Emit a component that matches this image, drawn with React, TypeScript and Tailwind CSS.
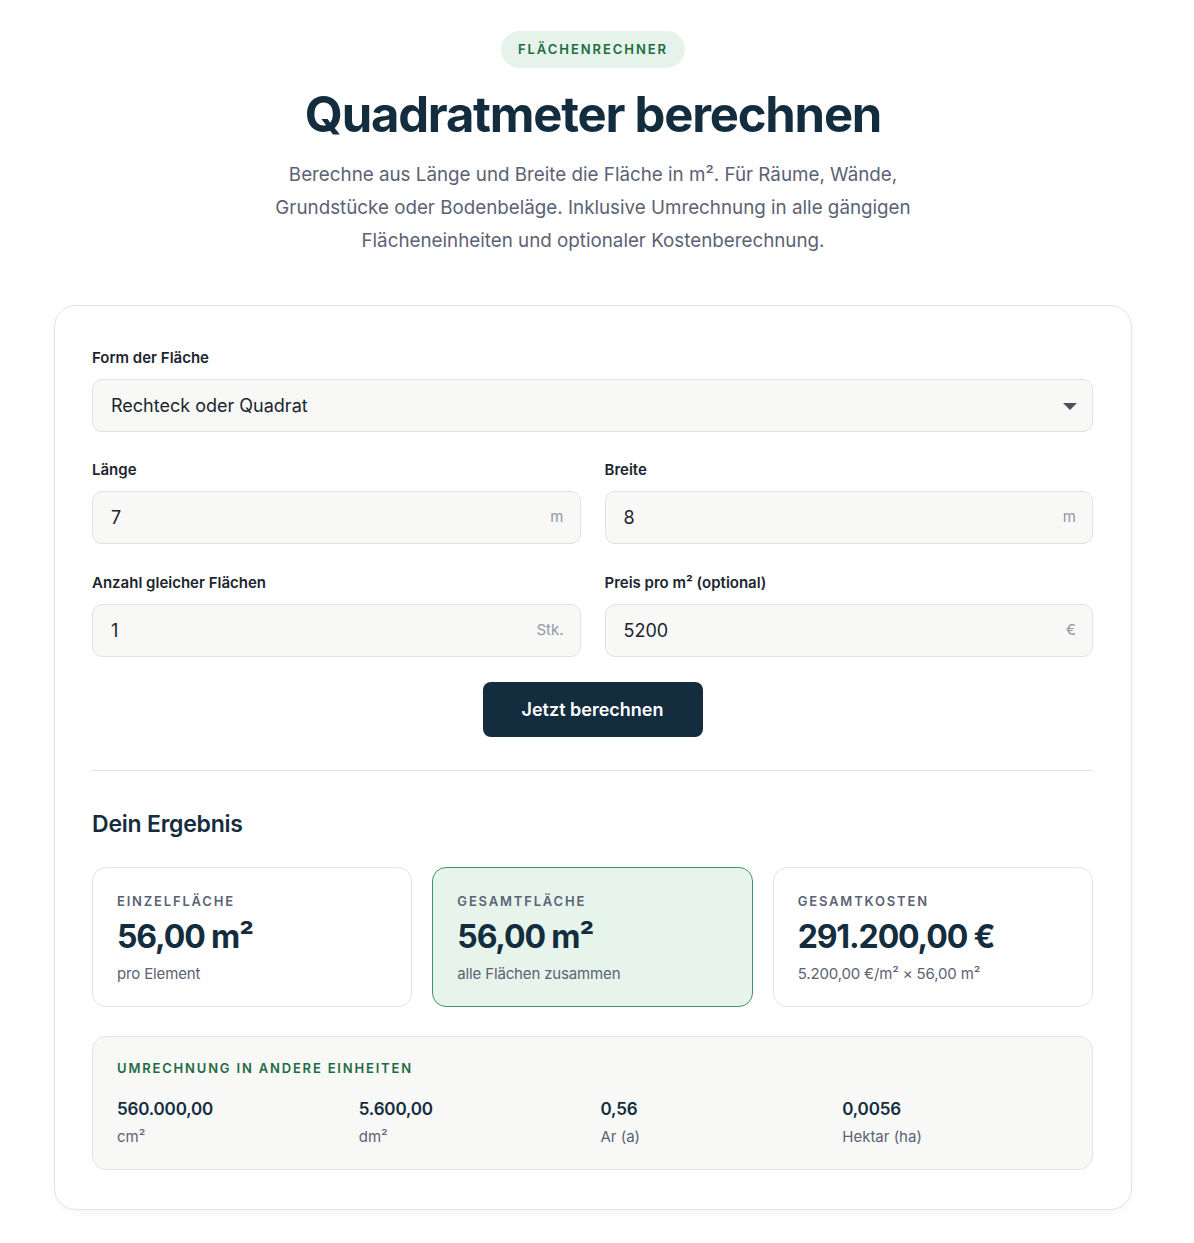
import React from 'react';

const font = { fontFamily: 'Inter, "Noto Sans", sans-serif' };

const Field: React.FC<{ label: string; value: string; unit: string }> = ({ label, value, unit }) => (
  <div>
    <div className="text-[15px] font-semibold text-[#1b2530] mb-[11px] leading-[20px]">{label}</div>
    <div className="h-[53px] rounded-[10px] border border-[#e4e2dc] bg-[#f8f8f6] flex items-center justify-between pl-[18px] pr-[16px]">
      <span className="text-[18px] text-[#1b2530]">{value}</span>
      <span className="text-[15px] text-[#9097a3]">{unit}</span>
    </div>
  </div>
);

const ResultCard: React.FC<{ label: string; value: string; sub: React.ReactNode; highlight?: boolean }> = ({
  label,
  value,
  sub,
  highlight,
}) => (
  <div
    className={`h-[140px] rounded-[14px] border px-[24px] pt-[25px] ${
      highlight ? 'bg-[#e7f4ec] border-[#3f946a]' : 'bg-white border-[#e6e4de]'
    }`}
  >
    <div className="text-[13px] font-semibold tracking-[0.14em] text-[#5b6274] leading-[16px]">{label}</div>
    <div className="text-[32px] font-bold text-[#132d3f] tracking-[-0.035em] leading-[40px] mt-[8px]">{value}</div>
    <div className="text-[15px] text-[#5b6274] leading-[20px] mt-[7px] tracking-[-0.01em]">{sub}</div>
  </div>
);

const units = [
  { value: '560.000,00', unit: 'cm²' },
  { value: '5.600,00', unit: 'dm²' },
  { value: '0,56', unit: 'Ar (a)' },
  { value: '0,0056', unit: 'Hektar (ha)' },
];

export default function App() {
  return (
    <div className="min-h-screen bg-white" style={font}>
      <div className="w-[1186px] pt-[31px] pb-[32px]">
        <div className="flex flex-col items-center">
          <div className="h-[37px] px-[17px] rounded-full bg-[#e6f3eb] text-[#1d6b42] text-[13px] font-semibold tracking-[0.15em] flex items-center">
            FLÄCHENRECHNER
          </div>
          <h1 className="mt-[19px] text-[49px] font-bold text-[#132d3f] tracking-[-0.025em] leading-[56px]">
            Quadratmeter berechnen
          </h1>
          <p className="mt-[15px] w-[660px] text-center text-[18.8px] leading-[33px] text-[#5b6274]">
            Berechne aus Länge und Breite die Fläche in m². Für Räume, Wände, Grundstücke oder Bodenbeläge. Inklusive
            Umrechnung in alle gängigen Flächeneinheiten und optionaler Kostenberechnung.
          </p>
        </div>

        <div className="mx-[54px] mt-[48px] rounded-[22px] border border-[#e6e4de] bg-white shadow-[0_2px_8px_rgba(20,30,40,0.04)] pl-[37px] pr-[38px] pt-[42px] pb-[39px]">
          <div className="text-[15px] font-semibold text-[#1b2530] mb-[11px] leading-[20px]">Form der Fläche</div>
          <div className="h-[53px] rounded-[10px] border border-[#e4e2dc] bg-[#f8f8f6] flex items-center justify-between pl-[18px] pr-[14px]">
            <span className="text-[18px] text-[#1b2530]">Rechteck oder Quadrat</span>
            <svg width="16" height="10" viewBox="0 0 16 10">
              <path d="M1 2h14L8 9z" fill="#4a5162" />
            </svg>
          </div>

          <div className="grid grid-cols-2 gap-x-[24px] gap-y-[29px] mt-[28px]">
            <Field label="Länge" value="7" unit="m" />
            <Field label="Breite" value="8" unit="m" />
            <Field label="Anzahl gleicher Flächen" value="1" unit="Stk." />
            <Field label="Preis pro m² (optional)" value="5200" unit="€" />
          </div>

          <div className="flex justify-center mt-[25px]">
            <button className="w-[220px] h-[55px] rounded-[8px] bg-[#132d3f] text-white text-[18px] font-semibold">
              Jetzt berechnen
            </button>
          </div>

          <div className="h-px bg-[#e6e4de] mt-[33px]" />

          <h2 className="mt-[38px] text-[23px] font-semibold text-[#132d3f] leading-[30px] tracking-[-0.01em]">
            Dein Ergebnis
          </h2>

          <div className="grid grid-cols-3 gap-[20px] mt-[28px]">
            <ResultCard label="EINZELFLÄCHE" value="56,00 m²" sub="pro Element" />
            <ResultCard label="GESAMTFLÄCHE" value="56,00 m²" sub="alle Flächen zusammen" highlight />
            <ResultCard label="GESAMTKOSTEN" value="291.200,00 €" sub="5.200,00 €/m² × 56,00 m²" />
          </div>

          <div className="mt-[29px] rounded-[14px] border border-[#e6e4de] bg-[#f8f8f6] px-[24px] pt-[23px] pb-[22px]">
            <div className="text-[13px] font-semibold tracking-[0.14em] text-[#1d6b42] leading-[16px]">
              UMRECHNUNG IN ANDERE EINHEITEN
            </div>
            <div className="grid grid-cols-4 gap-[16px] mt-[22px]">
              {units.map((u) => (
                <div key={u.unit}>
                  <div className="text-[17px] font-semibold text-[#132d3f] leading-[22px] tracking-[-0.01em]">
                    {u.value}
                  </div>
                  <div className="text-[15px] text-[#5b6274] leading-[20px] mt-[7px]">{u.unit}</div>
                </div>
              ))}
            </div>
          </div>
        </div>
      </div>
    </div>
  );
}
